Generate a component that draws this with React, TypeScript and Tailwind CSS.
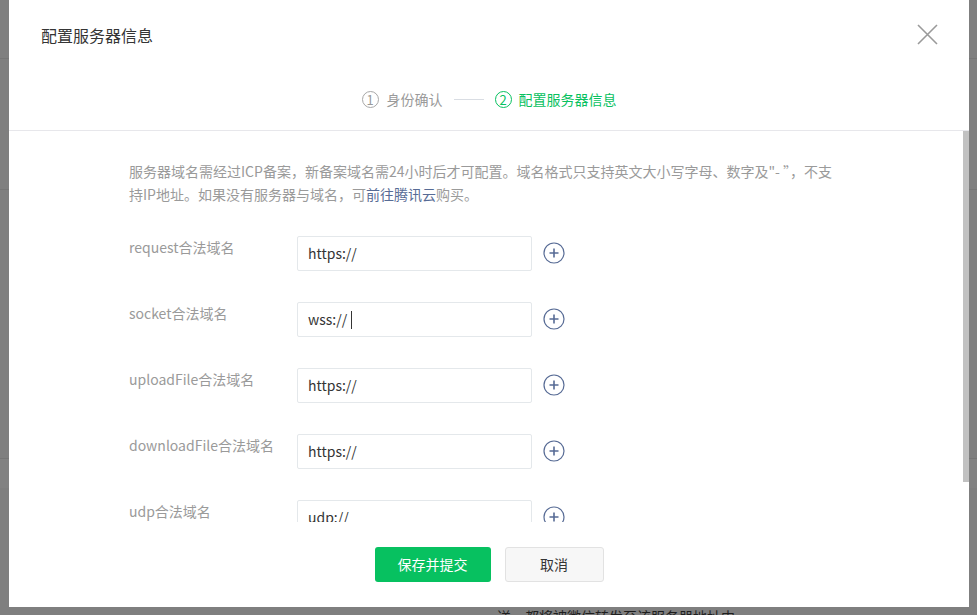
import React from "react"

const rows = [
  { label: "request合法域名", value: "https://" },
  { label: "socket合法域名", value: "wss://", caret: true },
  { label: "uploadFile合法域名", value: "https://" },
  { label: "downloadFile合法域名", value: "https://" },
  { label: "udp合法域名", value: "udp://" },
]

const PlusCircle = () => (
  <svg width="22" height="22" viewBox="0 0 22 22" fill="none">
    <circle cx="11" cy="11" r="10" stroke="#576b95" strokeWidth="1.2" />
    <path d="M11 6.5v9M6.5 11h9" stroke="#576b95" strokeWidth="1.6" />
  </svg>
)

const App: React.FC = () => {
  return (
    <div
      className="relative w-[977px] h-[615px] overflow-hidden bg-[#7f7f7f]"
      style={{ fontFamily: '"Noto Sans CJK SC", "Noto Sans", sans-serif' }}
    >
      {/* page behind the mask */}
      <div className="flex flex-col h-full">
        <div className="h-[59px] border-b border-[#767676]" />
        <div className="h-[131px] border-b border-[#767676]" />
        <div className="h-[269px] border-b border-[#767676]" />
        <div className="h-[29px] bg-[#828282]" />
        <div className="flex-1 flex items-end pl-[497px]">
          <span className="text-[14px] leading-[20px] text-[#1e1e1e] translate-y-[11px]">
            送，都将被微信转发至该服务器地址中
          </span>
        </div>
      </div>

      {/* dialog */}
      <div className="absolute left-[9px] top-0 w-[960px] h-[607px] bg-white flex flex-col">
        {/* header */}
        <div className="relative h-[131px] shrink-0 border-b border-[#e7e7eb]">
          <div className="pl-[32px] pt-[23px] text-[16px] leading-[24px] text-[#353535]">
            配置服务器信息
          </div>
          <button type="button" className="absolute right-[31px] top-[24px] w-[21px] h-[21px]">
            <svg width="21" height="21" viewBox="0 0 21 21">
              <path d="M1 1l19 19M20 1L1 20" stroke="#9a9a9a" strokeWidth="1.6" />
            </svg>
          </button>
          <div className="flex items-center justify-center mt-[42px] text-[14px] leading-[20px]">
            <div className="flex items-center text-[#9a9a9a]">
              <span className="inline-flex items-center justify-center w-[17px] h-[17px] rounded-full border border-[#a8a8a8] text-[13px] leading-none mr-[8px]">
                1
              </span>
              身份确认
            </div>
            <div className="w-[30px] h-px bg-[#d9dde3] mx-[11px]" />
            <div className="flex items-center text-[#07c160]">
              <span className="inline-flex items-center justify-center w-[17px] h-[17px] rounded-full border border-[#07c160] text-[13px] leading-none mr-[7px]">
                2
              </span>
              配置服务器信息
            </div>
          </div>
        </div>

        {/* body */}
        <div className="relative flex-1 overflow-hidden">
          <div className="pl-[120px] pt-[29px]">
            <div className="text-[14px] leading-[23px] text-[#9a9a9a]">
              <div className="whitespace-nowrap">
                服务器域名需经过ICP备案，新备案域名需24小时后才可配置。域名格式只支持英文大小写字母、数字及"-
                ”，不支
              </div>
              <div className="whitespace-nowrap">
                持IP地址。如果没有服务器与域名，可<a className="text-[#576b95]">前往腾讯云</a>购买。
              </div>
            </div>
            <div className="mt-[30px] flex flex-col gap-[31px]">
              {rows.map((r) => (
                <div key={r.label} className="flex items-start">
                  <div className="w-[168px] pt-[1px] text-[14px] leading-[20px] text-[#9a9a9a]">
                    {r.label}
                  </div>
                  <div className="w-[235px] h-[35px] border border-[#e4e8eb] rounded-[2px] flex items-center pl-[10px] text-[14px] text-[#353535]">
                    {r.value}
                    {r.caret && <span className="ml-[4px] w-px h-[18px] bg-[#353535]" />}
                  </div>
                  <div className="ml-[11px] pt-[6px]">
                    <PlusCircle />
                  </div>
                </div>
              ))}
            </div>
          </div>
          {/* scrollbar */}
          <div className="absolute right-0 top-0 w-[6px] h-[351px] bg-[#c1c1c1]" />
        </div>

        {/* footer */}
        <div className="h-[85px] shrink-0 flex justify-center gap-[14px] pt-[25px]">
          <button
            type="button"
            className="w-[116px] h-[35px] rounded-[3px] bg-[#07c160] text-white text-[14px]"
          >
            保存并提交
          </button>
          <button
            type="button"
            className="w-[99px] h-[35px] rounded-[3px] bg-[#f7f7f7] border border-[#e2e2e2] text-[#353535] text-[14px]"
          >
            取消
          </button>
        </div>
      </div>
    </div>
  )
}

export default App
